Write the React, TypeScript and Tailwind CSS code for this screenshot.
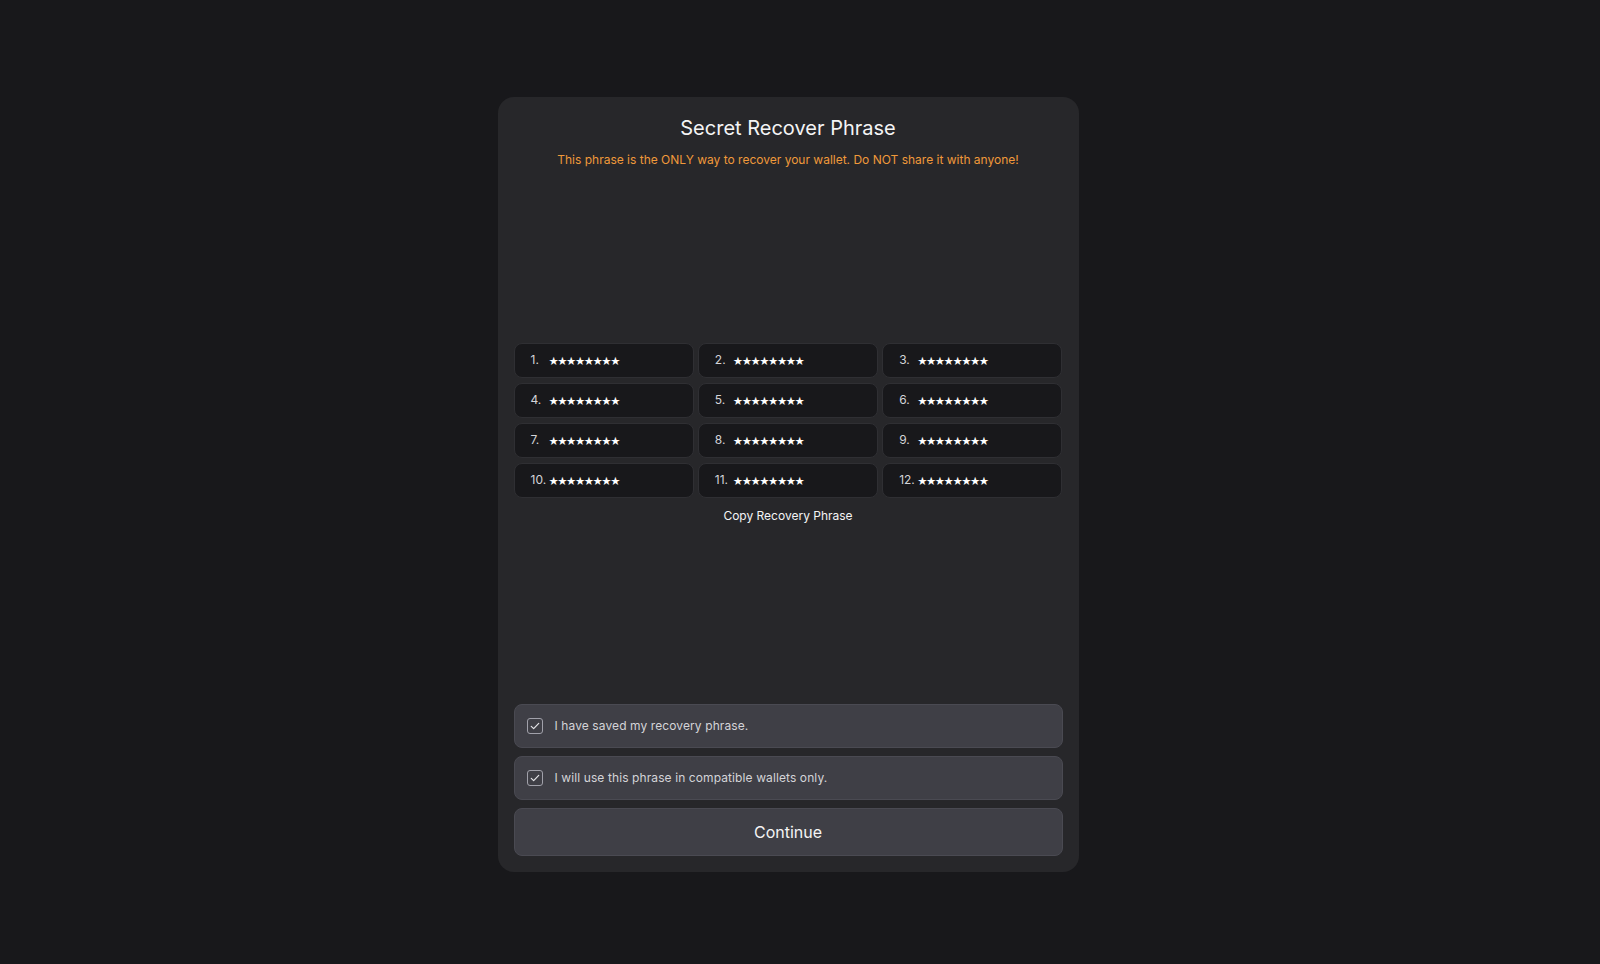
import React from "react";

const words = Array.from({ length: 12 }, (_, i) => i + 1);

function Check() {
  return (
    <span className="flex h-4 w-4 shrink-0 items-center justify-center rounded-[3px] border border-[#a1a1aa]">
      <svg viewBox="0 0 16 16" className="h-3 w-3" fill="none" stroke="#e4e4e7" strokeWidth="1.6" strokeLinecap="round" strokeLinejoin="round">
        <path d="M3 8.5l3.2 3L13 4.5" />
      </svg>
    </span>
  );
}

export default function App() {
  return (
    <div
      className="flex min-h-screen justify-center bg-[#18181b] pt-[97px] pr-6"
      style={{ fontFamily: "Inter, 'Noto Sans', sans-serif" }}
    >
      <div className="flex h-[775px] w-[581px] flex-col rounded-2xl bg-[#27272a] p-4">
        <div className="flex flex-col items-center">
          <h1 className="mt-px text-xl leading-7 font-normal text-[#f4f4f5]">Secret Recover Phrase</h1>
          <p className="mt-[10px] text-xs leading-4 text-[#f0993a]">
            This phrase is the ONLY way to recover your wallet. Do NOT share it with anyone!
          </p>
        </div>
        <div className="flex flex-1 flex-col justify-center pb-[6px]">
          <div className="grid grid-cols-3 gap-x-1 gap-y-[5px]">
            {words.map((n) => (
              <div
                key={n}
                className="flex h-[35px] items-center rounded-lg border border-[#2f2f33] bg-[#18181b] pl-4"
              >
                <span className="w-[18px] shrink-0 text-xs text-[#d4d4d8]">{n}.</span>
                <span
                  className="translate-y-[2px] text-[11.5px] leading-none tracking-[-1.5px] text-white"
                  style={{ fontFamily: "'DejaVu Sans', sans-serif" }}
                >
                  ★★★★★★★★
                </span>
              </div>
            ))}
          </div>
          <div className="mt-[10px] text-center text-xs leading-4 text-[#f4f4f5]">Copy Recovery Phrase</div>
        </div>
        <div className="flex flex-col gap-2">
          <div className="flex h-11 items-center gap-3 rounded-lg border border-[#4a4a52] bg-[#3f3f46] px-3">
            <Check />
            <span className="text-xs tracking-[0.1px] text-[#d4d4d8]">I have saved my recovery phrase.</span>
          </div>
          <div className="flex h-11 items-center gap-3 rounded-lg border border-[#4a4a52] bg-[#3f3f46] px-3">
            <Check />
            <span className="text-xs tracking-[0.1px] text-[#d4d4d8]">I will use this phrase in compatible wallets only.</span>
          </div>
          <button className="flex h-12 items-center justify-center rounded-lg border border-[#4a4a52] bg-[#3f3f46] text-base text-[#f4f4f5]">
            Continue
          </button>
        </div>
      </div>
    </div>
  );
}
